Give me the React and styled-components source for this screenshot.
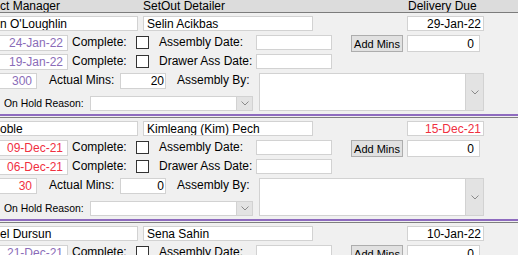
import React from "react";
import styled, { createGlobalStyle } from "styled-components";

const GlobalStyle = createGlobalStyle`
  html, body {
    margin: 0;
    padding: 0;
    background: #f0f0f0;
    overflow: hidden;
  }
  body {
    font-family: "Liberation Sans", Arial, sans-serif;
    font-size: 12px;
    color: #000;
  }
`;

const Page = styled.div`
  width: 518px;
  height: 255px;
  overflow: hidden;
`;

const Header = styled.div`
  display: flex;
  height: 12px;
  line-height: 12px;
  background: #dcdcdc;
  border-bottom: 1px solid #7c7c7c;
  white-space: nowrap;
`;

const HeadCell = styled.div`
  width: ${(p) => p.$w || "auto"};
  overflow: hidden;
`;

const Record = styled.div`
  display: grid;
  grid-template-columns: 259px 225px;
  grid-template-rows: 19px 19px 19px 23px 15px;
  padding-top: 3px;
`;

const Row = styled.div`
  grid-column: ${(p) => p.$col || "1 / -1"};
  grid-row: ${(p) => p.$row};
  display: flex;
  align-items: flex-start;
  white-space: nowrap;
`;

const Field = styled.input.attrs({ readOnly: true, type: "text" })`
  box-sizing: border-box;
  width: ${(p) => p.$w}px;
  height: ${(p) => p.$h || 15}px;
  margin: 0 0 0 ${(p) => p.$ml || 0}px;
  padding: 0 ${(p) => p.$pr ?? 2}px 0 ${(p) => (p.$cut ? 0 : 3)}px;
  border: 1px solid #d2d2d2;
  border-left: ${(p) => (p.$cut ? "none" : "1px solid #d2d2d2")};
  background: #fff;
  font: 12px "Liberation Sans", Arial, sans-serif;
  line-height: 13px;
  color: ${(p) => p.$color || "#000"};
  text-align: ${(p) => (p.$right ? "right" : "left")};
  outline: none;
`;

const Label = styled.span`
  display: inline-block;
  width: ${(p) => p.$w}px;
  margin-left: ${(p) => p.$ml || 0}px;
  font-size: ${(p) => p.$size || 12}px;
  line-height: 15px;
`;

const Check = styled.span`
  box-sizing: border-box;
  width: 13px;
  height: 13px;
  margin-top: 1px;
  border: 1px solid #333;
  background: #fff;
`;

const Button = styled.button`
  box-sizing: border-box;
  width: 52px;
  height: 17px;
  margin: 0 0 0 19px;
  padding: 0;
  border: 1px solid #adadad;
  background: #e1e1e1;
  font: 11px "Liberation Sans", Arial, sans-serif;
  color: #000;
`;

const Combo = styled.div`
  box-sizing: border-box;
  display: flex;
  justify-content: flex-end;
  width: ${(p) => p.$w}px;
  height: ${(p) => p.$h}px;
  border: 1px solid #d2d2d2;
  background: #fff;
`;

const DropBtn = styled.div`
  width: ${(p) => p.$w}px;
  display: flex;
  align-items: center;
  justify-content: center;
  background: #e3e3e3;
  border-left: 1px solid #d2d2d2;
`;

const ListArea = styled.div`
  grid-column: 2;
  grid-row: 4 / span 2;
`;

const Divider = styled.div`
  height: 1px;
  margin-top: 3px;
  border-top: 2px solid #8e6bbf;
  border-bottom: 1px solid #7f7f7f;
`;

const PURPLE = "#8a6cb8";
const RED = "#f0303f";

const Chevron = () => (
  <svg width="8" height="5" viewBox="0 0 8 5">
    <polyline points="0.5,0.5 4,4 7.5,0.5" fill="none" stroke="#8a8a8a" strokeWidth="1" />
  </svg>
);

const records = [
  {
    pm: "n O'Loughlin",
    setout: "Selin Acikbas",
    due: "29-Jan-22",
    dueColor: "#000",
    d1: "24-Jan-22",
    d2: "19-Jan-22",
    dateColor: PURPLE,
    est: "300",
    actual: "20",
  },
  {
    pm: "oble",
    setout: "Kimleang (Kim) Pech",
    due: "15-Dec-21",
    dueColor: RED,
    d1: "09-Dec-21",
    d2: "06-Dec-21",
    dateColor: RED,
    est: "30",
    actual: "0",
  },
  {
    pm: "el Dursun",
    setout: "Sena Sahin",
    due: "10-Jan-22",
    dueColor: "#000",
    d1: "21-Dec-21",
    d2: "",
    dateColor: PURPLE,
    est: "",
    actual: "0",
  },
];

function JobRecord({ r }) {
  return (
    <>
      <Record>
        <Row $row={1}>
          <Field $cut $w={138} value={r.pm} />
          <Field $ml={5} $w={170} value={r.setout} />
          <Field $ml={94} $w={77} $right $color={r.dueColor} value={r.due} />
        </Row>
        <Row $row={2}>
          <Field $cut $w={68} $h={16} $pr={4} $right $color={r.dateColor} value={r.d1} />
          <Label $ml={4} $w={64}>Complete:</Label>
          <Check />
          <Label $ml={10} $w={97}>Assembly Date:</Label>
          <Field $w={76} value="" />
          <Button>Add Mins</Button>
          <Field $ml={4} $w={73} $h={17} $pr={5} $right value="0" />
        </Row>
        <Row $row={3}>
          <Field $cut $w={68} $h={16} $pr={4} $right $color={r.dateColor} value={r.d2} />
          <Label $ml={4} $w={64}>Complete:</Label>
          <Check />
          <Label $ml={10} $w={97}>Drawer Ass Date:</Label>
          <Field $w={76} value="" />
        </Row>
        <Row $row={4} $col={1}>
          <Field $cut $w={37} $h={16} $pr={4} $right $color={r.dateColor} value={r.est} />
          <Label $ml={12} $w={71}>Actual Mins:</Label>
          <Field $w={46} $h={16} $pr={1} $right value={r.actual} />
          <Label $ml={11} $w={82}>Assembly By:</Label>
        </Row>
        <Row $row={5} $col={1}>
          <Label $ml={4} $w={86} $size={10.4}>On Hold Reason:</Label>
          <Combo $w={163} $h={15}>
            <DropBtn $w={15}>
              <Chevron />
            </DropBtn>
          </Combo>
        </Row>
        <ListArea>
          <Combo $w={225} $h={38}>
            <DropBtn $w={17}>
              <Chevron />
            </DropBtn>
          </Combo>
        </ListArea>
      </Record>
      <Divider />
    </>
  );
}

export default function App() {
  return (
    <Page>
      <GlobalStyle />
      <Header>
        <HeadCell $w="143px">ct Manager</HeadCell>
        <HeadCell $w="265px">SetOut Detailer</HeadCell>
        <HeadCell>Delivery Due</HeadCell>
      </Header>
      {records.map((r, i) => (
        <JobRecord key={i} r={r} />
      ))}
    </Page>
  );
}
